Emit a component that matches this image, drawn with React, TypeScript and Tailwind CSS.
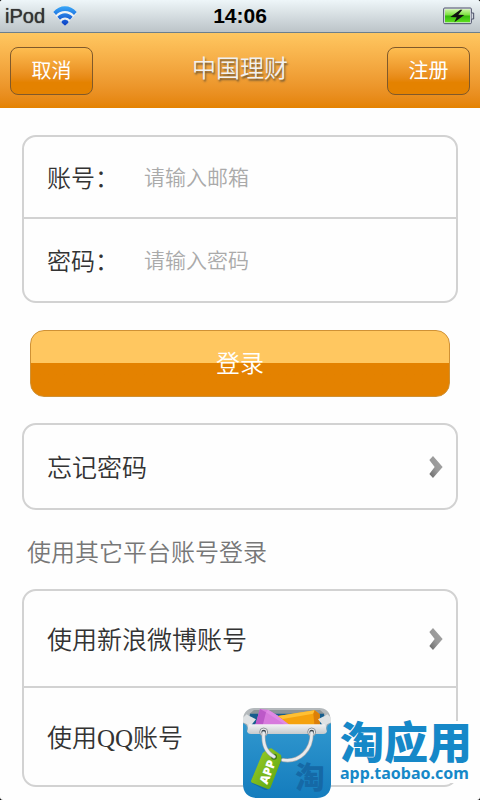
import { ReactNode } from 'react'

type fieldProps = {
    id: string
    label: string
    type: string
    placeholder: string
}

type rowProps = {
    children: ReactNode
    className?: string
}

const WifiIcon = () => (
    <svg className="h-5 w-6" viewBox="0 0 72 60" fill="none">
        <defs>
            <linearGradient id="wifi" x1="0" y1="0" x2="0" y2="60" gradientUnits="userSpaceOnUse">
                <stop offset="0" stopColor="#38a8f8" />
                <stop offset="1" stopColor="#0a3cc4" />
            </linearGradient>
        </defs>
        <path d="M36 60 1 22C20-2 52-2 71 22Z" fill="#fff" opacity=".6" />
        <path
            d="M1 18C20-5 52-5 71 18l-8 9C50 11 22 11 9 27Z"
            fill="url(#wifi)"
        />
        <path
            d="M13 32c13-14 33-14 46 0l-8 9c-9-9-21-9-30 0Z"
            fill="url(#wifi)"
        />
        <path d="M26 46c6-6 14-6 20 0v4L36 59 26 50Z" fill="url(#wifi)" />
    </svg>
)

const BatteryIcon = () => (
    <svg className="h-[18px] w-8" viewBox="0 0 96 54">
        <defs>
            <linearGradient id="battery" x1="0" y1="0" x2="0" y2="1">
                <stop offset="0" stopColor="#c9f7a0" />
                <stop offset=".45" stopColor="#7be03c" />
                <stop offset=".5" stopColor="#35b80c" />
                <stop offset="1" stopColor="#5ce01e" />
            </linearGradient>
        </defs>
        <rect
            x="2"
            y="3"
            width="83"
            height="47"
            rx="3"
            fill="#e6e9ee"
            stroke="#4a4f68"
            strokeWidth="3"
        />
        <rect x="6" y="7" width="75" height="39" fill="url(#battery)" />
        <path
            d="M86 18h6v18h-6"
            fill="#d5dbe1"
            stroke="#4a4f68"
            strokeWidth="3"
        />
        <path d="M52 8 22 30l19 1-7 15 30-22-18-1 12-15Z" fill="#111" />
    </svg>
)

const Arrow = () => (
    <svg className="h-[22px] w-[14px] shrink-0" viewBox="0 0 42 66">
        <defs>
            <linearGradient id="arrow" x1="0" y1="1" x2="1" y2="0">
                <stop offset="0" stopColor="#666" />
                <stop offset=".45" stopColor="#999" />
                <stop offset="1" stopColor="#a4a4a4" />
            </linearGradient>
        </defs>
        <path d="M12 0 41 33 12 66 1 54l16-21L1 12Z" fill="url(#arrow)" />
    </svg>
)

const BagLogo = () => (
    <svg className="h-[92px] w-[90px] shrink-0" viewBox="0 0 270 276">
        <defs>
            <linearGradient id="bag" x1="0" y1="0" x2="0" y2="1">
                <stop offset="0" stopColor="#3198cf" />
                <stop offset="1" stopColor="#147cbd" />
            </linearGradient>
            <linearGradient id="rim" x1="0" y1="0" x2="0" y2="1">
                <stop offset="0" stopColor="#f2f3f4" />
                <stop offset="1" stopColor="#c6cacd" />
            </linearGradient>
            <linearGradient id="tag" x1="0" y1="0" x2="1" y2="1">
                <stop offset="0" stopColor="#a0cf2a" />
                <stop offset="1" stopColor="#58a30e" />
            </linearGradient>
        </defs>
        <path
            d="M36 3h196c20 0 33 14 33 30l2 60H3l1-60C4 17 18 3 36 3Z"
            fill="#b4b9bc"
        />
        <path d="M36 9h198l14 12H22Z" fill="#8c9498" />
        <path d="M24 20h222l6 40H18Z" fill="#165d8d" />
        <path d="m54 6 24 2 76 46-8 10H37Z" fill="#d77add" />
        <path d="m54 6 18 10-12 48H37Z" fill="#bc59c8" />
        <path d="m72 16 6-8 76 46-8 10Z" fill="#df8ae5" />
        <path d="m108 27 110-17 15 12v40h-79Z" fill="#f5a20e" />
        <path d="m108 27 110-17-4 10-92 16Z" fill="#ffc034" />
        <path d="m218 10 15 12v40h-15l-4-42Z" fill="#dc7f09" />
        <path
            d="M3 44 18 60h234l15-16v188c0 26-17 41-42 41H45c-26 0-42-16-42-41Z"
            fill="url(#bag)"
        />
        <path
            d="M3 32 14 22c8 6 18 10 28 15L28 54l-8 22-5-24L3 47ZM267 32l-11-10c-8 6-18 10-28 15l14 17 8 22 5-24 12-5Z"
            fill="#dfe2e4"
        />
        <path
            d="M22 52h226l7 20c-1 6-5 9-11 9H27c-7 0-11-3-12-9Z"
            fill="url(#rim)"
        />
        <path
            d="m3 48 12 5 1 18M267 48l-12 5-1 18"
            stroke="#9fa8ad"
            strokeWidth="2"
            fill="none"
        />
        <text
            x="160"
            y="244"
            fontSize="88"
            fontWeight="900"
            fill="#1569a6"
            fontFamily="'Noto Sans CJK SC', sans-serif"
        >
            淘
        </text>
        <circle cx="65" cy="75" r="12" fill="#e9ebec" stroke="#8e9498" strokeWidth="3" />
        <circle cx="65" cy="75" r="7" fill="#37424a" />
        <circle cx="209" cy="75" r="12" fill="#e9ebec" stroke="#8e9498" strokeWidth="3" />
        <circle cx="209" cy="75" r="7" fill="#37424a" />
        <path
            d="m78 129 38 19c4 2 5 6 4 10l-39 84c-3 7-9 8-14 6l-35-18c-4-2-5-7-3-12l34-78Z"
            fill="#0c5887"
            opacity=".45"
        />
        <path
            d="m77 126 11-2 29 20 2 12-33 85c-2 5-6 6-11 4l-43-17c-5-2-6-5-4-9l34-81Z"
            fill="url(#tag)"
        />
        <circle cx="96" cy="149" r="9" fill="#3b750d" />
        <path
            d="M65 78c-3 32 7 58 31 71"
            fill="none"
            stroke="#9ba6ae"
            strokeWidth="12"
            strokeLinecap="round"
        />
        <path
            d="M65 78c-3 32 7 58 31 71"
            fill="none"
            stroke="#e8eaec"
            strokeWidth="8"
            strokeLinecap="round"
        />
        <path
            d="M209 78c1 50-36 89-86 81"
            fill="none"
            stroke="#9ba6ae"
            strokeWidth="12"
            strokeLinecap="round"
        />
        <path
            d="M209 78c1 50-36 89-86 81"
            fill="none"
            stroke="#e8eaec"
            strokeWidth="8"
            strokeLinecap="round"
        />
        <text
            x="76"
            y="234"
            transform="rotate(-69 76 234)"
            fontSize="37"
            fontWeight="800"
            fill="#fff"
            fontFamily="'Open Sans', sans-serif"
        >
            APP
        </text>
    </svg>
)

const HeaderButton = ({ children }: rowProps) => (
    <button className="h-12 w-[83px] rounded-lg border border-[#80592a] bg-linear-to-b from-[#fdbd50] to-[#e48200] to-75% text-xl font-normal text-white">
        {children}
    </button>
)

const Field = ({ id, label, type, placeholder }: fieldProps) => (
    <div className="flex h-[82px] items-center px-[23px] pt-1">
        <label htmlFor={id} className="w-[97px] shrink-0 text-2xl text-[#333]">
            {label}
        </label>
        <input
            id={id}
            type={type}
            placeholder={placeholder}
            className="w-full min-w-0 bg-transparent text-[21px] outline-none placeholder:text-[#aaa]"
        />
    </div>
)

const Panel = ({ children, className }: rowProps) => (
    <div
        className={`rounded-[14px] border-2 border-[#d2d2d2] ${className ?? ''}`}
    >
        {children}
    </div>
)

export const App = () => {
    return (
        <div className="bg-black">
            <div className="relative flex min-h-screen flex-col overflow-hidden rounded-[3px] bg-[#fefefe] font-['Liberation_Serif','Noto_Sans_CJK_SC',sans-serif] font-[350]">
                <div className="grid h-[33px] grid-cols-3 items-center border-b border-[#6d7f8b] bg-linear-to-b from-[#eef6f9] to-[#bcc4c8] px-[5px] font-['Liberation_Sans',sans-serif] text-xl">
                    <div className="flex items-center gap-2 font-normal text-[#333] text-shadow-[0_0_1px_#333]">
                        iPod
                        <WifiIcon />
                    </div>
                    <span className="text-center text-[21px] font-bold text-black">
                        14:06
                    </span>
                    <div className="flex justify-end">
                        <BatteryIcon />
                    </div>
                </div>

                <header className="flex h-[75px] items-center justify-between bg-linear-to-b from-[#ffc760] to-[#e48200] px-[10px]">
                    <HeaderButton>取消</HeaderButton>
                    <h1 className="pb-1 text-2xl text-[#f1f1f1] text-shadow-[1px_2px_2px_#6b5535]">
                        中国理财
                    </h1>
                    <HeaderButton>注册</HeaderButton>
                </header>

                <main className="flex flex-col px-[22px] pt-[27px]">
                    <form onSubmit={(e) => e.preventDefault()}>
                        <Panel className="divide-y-2 divide-[#d2d2d2]">
                            <Field
                                id="account"
                                label="账号："
                                type="email"
                                placeholder="请输入邮箱"
                            />
                            <Field
                                id="password"
                                label="密码："
                                type="password"
                                placeholder="请输入密码"
                            />
                        </Panel>
                        <div className="px-2 pt-[27px]">
                            <button
                                type="submit"
                                className="h-[67px] w-full rounded-[14px] border border-[#cf9135] bg-linear-to-b from-[#ffc760] from-50% to-[#e48200] to-50% text-2xl text-white"
                            >
                                登录
                            </button>
                        </div>
                    </form>

                    <Panel className="mt-[26px]">
                        <a
                            href="#forgot"
                            className="flex h-[83px] items-center justify-between pr-[13px] pl-[23px] text-[25px] text-[#333]"
                        >
                            <span className="pt-1">忘记密码</span>
                            <Arrow />
                        </a>
                    </Panel>

                    <h2 className="px-[5px] pt-7 pb-[21px] text-2xl leading-[30px] text-[#777]">
                        使用其它平台账号登录
                    </h2>

                    <Panel className="divide-y-2 divide-[#d2d2d2]">
                        <a
                            href="#weibo"
                            className="flex h-[97px] items-center justify-between pr-[13px] pl-[23px] text-[25px] text-[#333]"
                        >
                            <span className="pt-1">使用新浪微博账号</span>
                            <Arrow />
                        </a>
                        <a
                            href="#qq"
                            className="flex h-[97px] items-center pl-[23px] text-[25px] text-[#333]"
                        >
                            <span className="pt-1">使用QQ账号</span>
                        </a>
                    </Panel>
                </main>

                <div className="absolute right-2 bottom-[1px] flex items-end gap-2">
                    <BagLogo />
                    <div className="mb-4 bg-[#fefefe] font-['Noto_Sans','Noto_Sans_CJK_SC',sans-serif] text-[#1688c8]">
                        <p className="text-[44px] leading-[42px] font-black">
                            淘应用
                        </p>
                        <p className="text-base leading-5 font-bold">
                            app.taobao.com
                        </p>
                    </div>
                </div>
            </div>
        </div>
    )
}

export default App
